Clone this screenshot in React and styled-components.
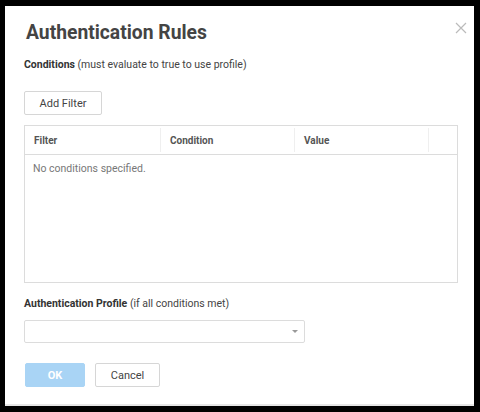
import React from 'react';
import styled, { createGlobalStyle } from 'styled-components';

const GlobalStyle = createGlobalStyle`
  html, body {
    margin: 0;
    padding: 0;
    background: #000;
  }
  body {
    font-family: Roboto, "Liberation Sans", Arial, sans-serif;
    color: #333;
  }
`;

const Frame = styled.div`
  width: 480px;
  height: 412px;
  padding: 6px 6px 6px 5px;
  box-sizing: border-box;
`;

const Dialog = styled.div`
  position: relative;
  height: 100%;
  background: #fff;
  border-bottom: 2px solid #e6e6e6;
  box-sizing: border-box;
  padding: 15px 16px 0 19px;
  display: flex;
  flex-direction: column;
`;

const Title = styled.h2`
  margin: 0;
  font-size: 19.3px;
  font-weight: 700;
  color: #444;
  line-height: 24px;
  padding-left: 2px;
`;

const Close = styled.button`
  position: absolute;
  top: 16px;
  right: 6px;
  border: none;
  background: none;
  padding: 0;
  width: 14px;
  height: 14px;
  cursor: pointer;
`;

const Label = styled.div`
  font-size: 10.5px;
  color: #444;
  margin-top: ${(p) => p.top}px;
  line-height: 14px;

  b {
    font-weight: 700;
    color: #333;
  }
`;

const Button = styled.button`
  font-family: inherit;
  font-size: 11px;
  height: 24px;
  width: ${(p) => p.width}px;
  border-radius: 2px;
  cursor: pointer;
  border: 1px solid ${(p) => (p.primary ? '#a9d4f5' : '#d6d6d6')};
  background: ${(p) => (p.primary ? '#a9d4f5' : '#fff')};
  color: ${(p) => (p.primary ? '#fff' : '#444')};
  font-weight: ${(p) => (p.primary ? 700 : 400)};
  padding: 0;
`;

const AddFilter = styled(Button)`
  margin-top: 19px;
  align-self: flex-start;
`;

const Table = styled.div`
  margin-top: 10px;
  height: 156px;
  border: 1px solid #dcdcdc;
  display: flex;
  flex-direction: column;
`;

const HeadRow = styled.div`
  display: grid;
  grid-template-columns: 136px 134px 134px 1fr;
  height: 28px;
  border-bottom: 1px solid #dcdcdc;
`;

const HeadCell = styled.div`
  font-size: 10px;
  font-weight: 700;
  color: #555;
  display: flex;
  align-items: center;
  padding-left: 9px;
  border-right: ${(p) => (p.last ? 'none' : '1px solid #efefef')};
  margin: 2px 0;
`;

const Empty = styled.div`
  font-size: 10.5px;
  color: #777;
  padding: 7px 8px;
`;

const Select = styled.div`
  margin-top: 9px;
  width: 281px;
  height: 23px;
  border: 1px solid #dcdcdc;
  border-radius: 2px;
  box-sizing: border-box;
  display: flex;
  align-items: center;
  justify-content: flex-end;
  padding-right: 6px;
`;

const Caret = styled.span`
  width: 0;
  height: 0;
  border-left: 3px solid transparent;
  border-right: 3px solid transparent;
  border-top: 3px solid #999;
`;

const Actions = styled.div`
  display: flex;
  gap: 10px;
  margin-top: 20px;
  padding-left: 1px;
`;

export default function App() {
  return (
    <>
      <GlobalStyle />
      <Frame>
        <Dialog>
          <Title>Authentication Rules</Title>
          <Close aria-label="Close">
            <svg width="12" height="12" viewBox="0 0 12 12">
              <path d="M1 1L11 11M11 1L1 11" stroke="#bbb" strokeWidth="1.2" />
            </svg>
          </Close>
          <Label top={13}>
            <b>Conditions</b> (must evaluate to true to use profile)
          </Label>
          <AddFilter width={78}>Add Filter</AddFilter>
          <Table>
            <HeadRow>
              <HeadCell>Filter</HeadCell>
              <HeadCell>Condition</HeadCell>
              <HeadCell>Value</HeadCell>
              <HeadCell last />
            </HeadRow>
            <Empty>No conditions specified.</Empty>
          </Table>
          <Label top={14}>
            <b>Authentication Profile</b> (if all conditions met)
          </Label>
          <Select>
            <Caret />
          </Select>
          <Actions>
            <Button primary width={60}>OK</Button>
            <Button width={65}>Cancel</Button>
          </Actions>
        </Dialog>
      </Frame>
    </>
  );
}
